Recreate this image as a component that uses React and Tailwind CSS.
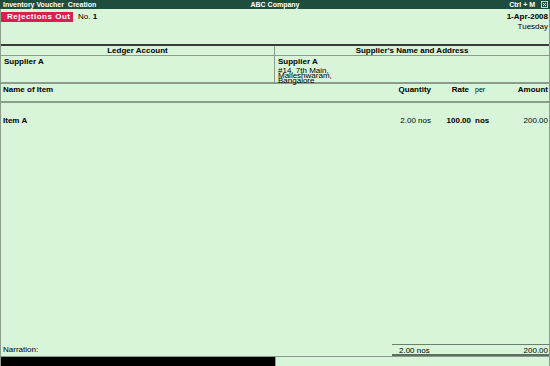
export default function App() {
  const font = { fontFamily: '"Liberation Sans", Arial, sans-serif' };
  return (
    <div style={font} className="w-[550px] h-[366px] bg-[#d9f5d9] flex flex-col text-black overflow-hidden">
      {/* Title bar */}
      <div className="h-[9px] bg-[#1f4d3d] text-white font-bold text-[7px] leading-[9px] grid grid-cols-[1fr_auto_1fr] items-center shrink-0">
        <div className="pl-[3px] whitespace-pre">Inventory Voucher  Creation</div>
        <div>ABC Company</div>
        <div className="flex justify-end items-center gap-[6px] pr-[2px]">
          <span>Ctrl + M</span>
          <svg width="7" height="7" viewBox="0 0 7 7">
            <rect x="0.5" y="0.5" width="6" height="6" fill="#1f4d3d" stroke="#d0d0d0" strokeWidth="1" />
            <path d="M2 2 L5 5 M5 2 L2 5" stroke="#e8e8e8" strokeWidth="1" />
          </svg>
        </div>
      </div>

      {/* Main */}
      <div className="flex-1 flex flex-col border-x border-[#8c9c8c]">
        {/* Header */}
        <div className="h-[35px] flex justify-between shrink-0 pt-[3px]">
          <div className="flex items-start gap-[5px]">
            <div className="h-[10px] w-[72px] bg-[#d81f4e] text-white font-bold text-[8px] leading-[10px] tracking-[0.5px] pl-[6px]">
              Rejections Out
            </div>
            <div className="text-[8px] leading-[10px]">
              No. <span className="font-bold">1</span>
            </div>
          </div>
          <div className="text-right pr-[1px] text-[8px] leading-[10px]">
            <div className="font-bold">1-Apr-2008</div>
            <div>Tuesday</div>
          </div>
        </div>

        <div className="h-[2px] bg-[#3b3b3b] shrink-0" />

        {/* Ledger / Supplier */}
        <div className="grid grid-cols-[274px_1fr] shrink-0 relative z-10">
          <div className="border-r border-[#8c9c8c]">
            <div className="h-[10px] border-b border-[#8c9c8c] text-center font-bold text-[8px] leading-[9px]">Ledger Account</div>
            <div className="h-[26px] pl-[3px] pt-[1px] font-bold text-[8px] leading-[9px]">Supplier A</div>
          </div>
          <div>
            <div className="h-[10px] border-b border-[#8c9c8c] text-center font-bold text-[8px] leading-[9px]">Supplier's Name and Address</div>
            <div className="h-[26px] pl-[3px] pt-[1px] text-[8px]">
              <div className="font-bold leading-[9px]">Supplier A</div>
              <div className="leading-[5px] pt-[2px]">
                <div>#14, 7th Main,</div>
                <div>Malleshwaram,</div>
                <div>Bangalore</div>
              </div>
            </div>
          </div>
        </div>

        <div className="h-[2px] bg-[#8c9c8c] shrink-0" />

        {/* Column headers */}
        <div className="h-[17px] grid grid-cols-[1fr_40px_40px_32px_46px] font-bold text-[8px] leading-[9px] pt-[1px] shrink-0">
          <div className="pl-[2px]">Name of Item</div>
          <div className="text-right">Quantity</div>
          <div className="text-right pr-[2px]">Rate</div>
          <div className="pl-[4px] font-normal text-[7px]">per</div>
          <div className="text-right pr-[1px]">Amount</div>
        </div>

        <div className="h-[2px] bg-[#8c9c8c] shrink-0" />

        {/* Items */}
        <div className="flex-1 pt-[13px]">
          <div className="grid grid-cols-[1fr_40px_40px_32px_46px] text-[8px] leading-[9px]">
            <div className="pl-[2px] font-bold">Item A</div>
            <div className="text-right">2.00 nos</div>
            <div className="text-right font-bold">100.00</div>
            <div className="pl-[4px] font-bold">nos</div>
            <div className="text-right pr-[1px]">200.00</div>
          </div>
        </div>

        {/* Totals + narration */}
        <div className="h-[12px] flex shrink-0">
          <div className="flex-1 text-[8px] leading-[9px] pl-[2px] pt-[1px]">Narration:</div>
          <div className="w-[157px] border-t border-[#6f7f6f] border-b-2 border-b-[#5f6f5f] flex justify-between text-[8px] leading-[9px] pt-[1px]">
            <span className="pl-[7px]">2.00 nos</span>
            <span className="pr-[1px]">200.00</span>
          </div>
        </div>

        <div className="h-[10px] border-t border-[#8c9c8c] flex shrink-0">
          <div className="w-[274px] bg-black" />
          <div className="flex-1 border-l border-[#8c9c8c]" />
        </div>
      </div>
    </div>
  );
}
